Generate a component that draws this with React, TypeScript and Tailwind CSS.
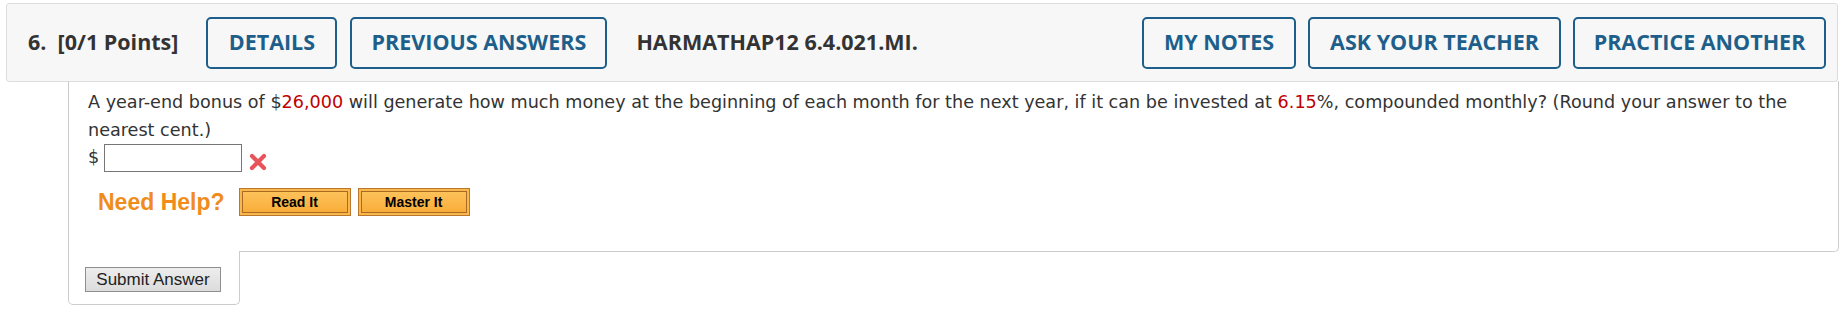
import React from "react";

const headerButtons = ["MY NOTES", "ASK YOUR TEACHER", "PRACTICE ANOTHER"];

function OutlineButton({ label, width }: { label: string; width: string }) {
  return (
    <button
      className={`h-[52px] ${width} rounded-[5px] border-2 border-[#1d5f8a] bg-transparent text-[21.5px] font-bold text-[#1d5f8a] flex items-center justify-center`}
    >
      {label}
    </button>
  );
}

function HelpButton({ label }: { label: string }) {
  return (
    <button className="h-[28px] w-[112px] border border-[#b9772f] bg-[#fbb84a] p-[2px]">
      <span className="flex h-full w-full items-center justify-center border border-[#a86a25] bg-gradient-to-b from-[#fdc25a] to-[#f9ad38] text-[14px] font-bold text-black [font-family:'Liberation_Sans',Arial,sans-serif]">
        {label}
      </span>
    </button>
  );
}

function RedX() {
  return (
    <svg width="20" height="20" viewBox="0 0 20 20" className="ml-[6px] mt-[8px]">
      <path
        d="M4 4 L16 16 M16 4 L4 16"
        stroke="#e8545b"
        strokeWidth="4.2"
        strokeLinecap="round"
      />
    </svg>
  );
}

export default function App() {
  return (
    <div className="h-[323px] w-[1842px] bg-white pl-[6px] pt-[3px] [font-family:'Open_Sans',sans-serif]">
      {/* question header */}
      <div className="flex h-[79px] w-[1832px] items-center rounded-[3px] border border-[#dddddd] bg-[#f7f7f7] pl-[21px] pr-[11px] text-[#333333]">
        <span className="whitespace-pre text-[21.5px] font-bold">6.{"  "}[0/1 Points]</span>
        <div className="ml-[28px] flex gap-[13px]">
          <OutlineButton label="DETAILS" width="w-[131px]" />
          <OutlineButton label="PREVIOUS ANSWERS" width="w-[257px]" />
        </div>
        <span className="ml-[29px] text-[21.5px] font-bold">HARMATHAP12 6.4.021.MI.</span>
        <div className="ml-auto flex gap-[12px]">
          <OutlineButton label={headerButtons[0]} width="w-[154px]" />
          <OutlineButton label={headerButtons[1]} width="w-[253px]" />
          <OutlineButton label={headerButtons[2]} width="w-[253px]" />
        </div>
      </div>

      {/* question body */}
      <div className="ml-[62px] w-[1771px]">
        <div className="-mt-px rounded-br-[5px] border-x border-b border-[#cccccc] pb-[35px] pl-[19px] pr-[20px] pt-[7px] [font-family:'DejaVu_Sans',Verdana,sans-serif] text-[17.6px] leading-[28px] text-[#333333]">
          <p>
            A year-end bonus of $<span className="text-[#c00000]">26,000</span> will generate how
            much money at the beginning of each month for the next year, if it can be invested at{" "}
            <span className="text-[#c00000]">6.15</span>%, compounded monthly? (Round your answer to
            the nearest cent.)
          </p>
          <div className="flex items-start">
            <span className="mr-[5px] -mt-[1px]">$</span>
            <input
              type="text"
              className="h-[28px] w-[138px] border border-[#767676] bg-white outline-none"
            />
            <RedX />
          </div>
          <div className="mt-[16px] ml-[10px] flex items-center gap-[7px]">
            <span className="mr-[7px] text-[23px] font-bold text-[#f08c1c] [font-family:'Liberation_Sans',Arial,sans-serif]">
              Need Help?
            </span>
            <HelpButton label="Read It" />
            <HelpButton label="Master It" />
          </div>
        </div>
        <div className="relative z-10 -mt-px w-[172px] rounded-b-[5px] border-x border-b border-[#cccccc] bg-white pb-[12px] pl-[16px] pt-[16px]">
          <button className="h-[25px] w-[136px] border border-[#8f8f8f] bg-gradient-to-b from-[#ededed] to-[#dcdcdc] text-[17px] leading-none text-[#222222] [font-family:'Liberation_Sans',Arial,sans-serif]">
            Submit Answer
          </button>
        </div>
      </div>
    </div>
  );
}
